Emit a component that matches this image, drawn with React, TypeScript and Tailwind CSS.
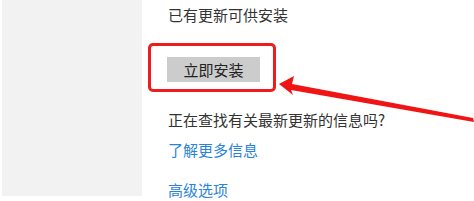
export default function App() {
  return (
    <main
      className="relative w-[474px] h-[201px] overflow-hidden bg-white flex"
      style={{ fontFamily: '"Noto Sans CJK SC", "Noto Sans", sans-serif' }}
    >
      {/* 左侧导航 */}
      <aside className="ml-[2px] w-[140px] h-[196px] bg-[#f2f2f2]" />

      {/* 更新内容 */}
      <section className="flex flex-col items-start pl-[26px] pt-[5px] text-[15px] leading-[20px]">
        <p className="text-[#333333]">已有更新可供安装</p>

        <div className="mt-[18px] -ml-[20px] h-[49px] w-[128px] border-[3px] border-[#ee1c1c] rounded-[5px] pt-[11px] pl-[16px]">
          <button className="w-[93px] h-[25px] bg-[#cccccc] text-[#222222] text-[15px] leading-[25px]">
            立即安装
          </button>
        </div>

        <p className="mt-[18px] text-[#333333]">正在查找有关最新更新的信息吗?</p>
        <a className="mt-[10px] text-[#2a84d6]">了解更多信息</a>
        <a className="mt-[20px] text-[#2a84d6]">高级选项</a>
      </section>

      {/* 红色箭头标注 */}
      <svg className="absolute inset-0 pointer-events-none" width="474" height="201" viewBox="0 0 474 201">
        <polygon
          points="279,84 294,76 292,84 473,118 474,122 291,90 293,95"
          fill="#f01414"
        />
      </svg>
    </main>
  )
}
